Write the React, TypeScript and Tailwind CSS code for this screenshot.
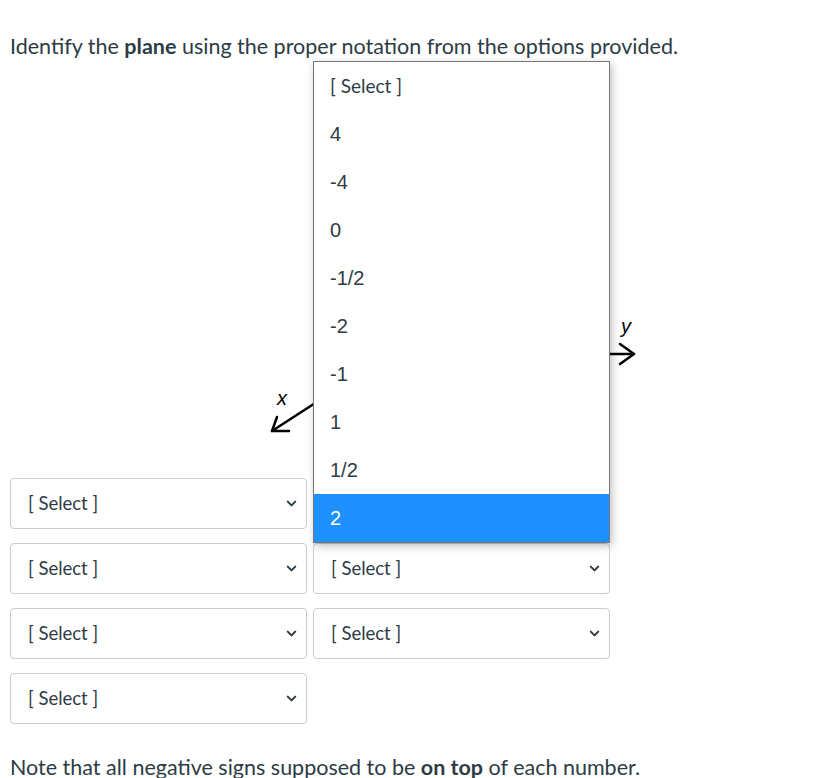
import { ChevronDown } from "lucide-react";

const options = ["4", "-4", "0", "-1/2", "-2", "-1", "1", "1/2", "2"];

function SelectBox({ hidden }: { hidden?: boolean }) {
  return (
    <div
      className={
        "h-[51px] rounded-[4px] border border-[#c7cdd1] bg-white flex items-center justify-between pl-[17px] pr-[7px] " +
        (hidden ? "invisible" : "")
      }
    >
      <span className="text-[18.5px] text-[#2d3b45]">[ Select ]</span>
      <ChevronDown className="w-[15px] h-[15px] text-[#2d3b45]" strokeWidth={3.2} />
    </div>
  );
}

function Axes() {
  return (
    <svg width="822" height="408" viewBox="0 0 822 408" className="block">
      <g stroke="#000" strokeWidth="2.5" fill="none" strokeLinecap="round" strokeLinejoin="round">
        {/* z axis (under dropdown) */}
        <line x1="460" y1="300" x2="460" y2="40" />
        {/* y axis */}
        <line x1="460" y1="289" x2="634" y2="289" />
        <polyline points="620,279 634,289 620,299" />
        {/* x axis */}
        <line x1="340" y1="322" x2="272" y2="366" />
        <polyline points="277,352 272,366 289,366" />
      </g>
      <text x="277" y="340" fontSize="20" fontStyle="italic" fontFamily="'Liberation Sans', Arial, sans-serif">x</text>
      <text x="621" y="268" fontSize="20" fontStyle="italic" fontFamily="'Liberation Sans', Arial, sans-serif">y</text>
    </svg>
  );
}

export default function App() {
  return (
    <div className="relative w-[822px] h-[778px] overflow-hidden bg-white font-['Lato',sans-serif] text-[#2d3b45]">
      <div className="pt-[33px] pl-[10px]">
        <p className="text-[21.5px] leading-[26px] whitespace-nowrap">
          Identify the <b>plane</b> using the proper notation from the options provided.
        </p>
      </div>

      <div className="mt-[6px]">
        <Axes />
      </div>

      <div className="pl-[10px] mt-[5px] grid grid-cols-[297px_297px] gap-x-[6px] gap-y-[14px]">
        <SelectBox />
        <SelectBox hidden />
        <SelectBox />
        <SelectBox />
        <SelectBox />
        <SelectBox />
        <SelectBox />
      </div>

      <p className="pl-[10px] mt-[30px] text-[21.5px] leading-[26px] whitespace-nowrap">
        Note that all negative signs supposed to be <b>on top</b> of each number.
      </p>

      {/* open dropdown list */}
      <div className="absolute left-[313px] top-[61px] w-[297px] border border-[#767676] bg-white shadow-[2px_3px_8px_rgba(0,0,0,0.25)]">
        <div className="h-[48px] flex items-center pl-[16px] text-[19px] text-[#2d3b45]">[ Select ]</div>
        {options.map((o, i) => (
          <div
            key={o}
            className={
              "h-[48px] flex items-center pl-[16px] text-[20px] font-['Liberation_Sans',Arial,sans-serif] " +
              (i === options.length - 1 ? "bg-[#1e90ff] text-white" : "text-[#2d3b45]")
            }
          >
            {o}
          </div>
        ))}
      </div>
    </div>
  );
}
